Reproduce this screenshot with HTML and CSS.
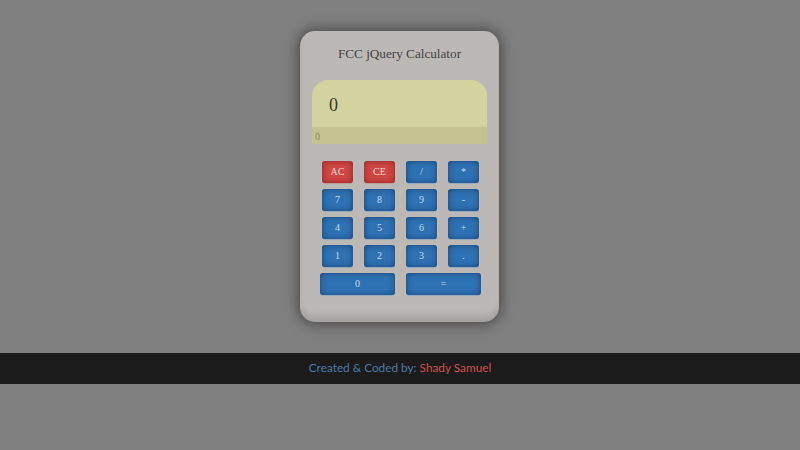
FILE: index.html
```html
<!DOCTYPE html>
<html>
<head>
<meta charset="utf-8">
<title>FCC jQuery Calculator</title>
<link rel="stylesheet" href="styles.css">
</head>
<body>
<main class="page">
  <div class="calc">
    <h1 class="title">FCC jQuery Calculator</h1>
    <div class="display">
      <div class="screen">0</div>
      <div class="history">0</div>
    </div>
    <div class="keys">
      <button class="key red">AC</button>
      <button class="key red">CE</button>
      <button class="key">/</button>
      <button class="key">*</button>
      <button class="key">7</button>
      <button class="key">8</button>
      <button class="key">9</button>
      <button class="key">-</button>
      <button class="key">4</button>
      <button class="key">5</button>
      <button class="key">6</button>
      <button class="key">+</button>
      <button class="key">1</button>
      <button class="key">2</button>
      <button class="key">3</button>
      <button class="key">.</button>
      <button class="key wide">0</button>
      <button class="key wide">=</button>
    </div>
  </div>
</main>
<footer class="footer">
  <span class="credit">Created &amp; Coded by:</span> <span class="author">Shady Samuel</span>
</footer>
</body>
</html>
```
FILE: styles.css
```css
html, body {
  margin: 0;
  padding: 0;
}
body {
  background: #808080;
  font-family: "Liberation Serif", "Times New Roman", serif;
  width: 800px;
  height: 450px;
  overflow: hidden;
}
.page {
  display: flex;
  justify-content: center;
  padding-top: 31px;
  padding-right: 1px;
  height: 322px;
  box-sizing: border-box;
}
.calc {
  width: 199px;
  height: 291px;
  box-sizing: border-box;
  background: #bcb8b5;
  border-radius: 15px;
  box-shadow: 0 0 14px 2px rgba(0, 0, 0, 0.45), inset 0 -8px 6px -2px rgba(0, 0, 0, 0.12);
  padding: 14px 12px 0 12px;
  display: flex;
  flex-direction: column;
}
.title {
  margin: 0;
  font-weight: normal;
  font-size: 13.2px;
  line-height: 18px;
  color: #444444;
  text-align: center;
}
.display {
  margin-top: 17px;
  height: 64px;
  display: flex;
  flex-direction: column;
}
.screen {
  height: 47px;
  background: #d3d3a0;
  border-radius: 16px 16px 0 0;
  color: #3a3a2a;
  font-size: 18px;
  line-height: 20px;
  padding: 15px 0 0 17px;
  box-sizing: border-box;
}
.history {
  height: 17px;
  background: #c5c28f;
  color: #8c8a58;
  font-size: 10px;
  line-height: 19px;
  padding-left: 3px;
}
.keys {
  margin-top: 17px;
  padding-left: 10px;
  display: grid;
  grid-template-columns: repeat(4, 31px);
  grid-auto-rows: 22px;
  column-gap: 11px;
  row-gap: 6px;
}
.key {
  margin: 0;
  padding: 0;
  border: none;
  border-radius: 3px;
  background: #2f72b4;
  box-shadow: inset 0 0 6px rgba(10, 30, 60, 0.55), 0 1px 0 rgba(110, 160, 210, 0.55);
  color: #c8daef;
  font-family: "Liberation Serif", "Times New Roman", serif;
  font-size: 10px;
  line-height: 22px;
  text-align: center;
}
.key.red {
  background: #d04744;
  box-shadow: inset 0 0 6px rgba(80, 10, 10, 0.55), 0 1px 0 rgba(200, 120, 120, 0.4);
  color: #f4dcdb;
}
.key.wide {
  grid-column: span 2;
  width: 75px;
  margin-left: -2px;
}
.key.wide + .key.wide {
  margin-left: 0;
}
.footer {
  margin-top: 31px;
  height: 31px;
  background: #1b1b1b;
  text-align: center;
  font-family: Lato, "Noto Sans", sans-serif;
  font-size: 11.8px;
  line-height: 29px;
  color: #4b79a8;
}
.author {
  color: #cc504b;
}
```
